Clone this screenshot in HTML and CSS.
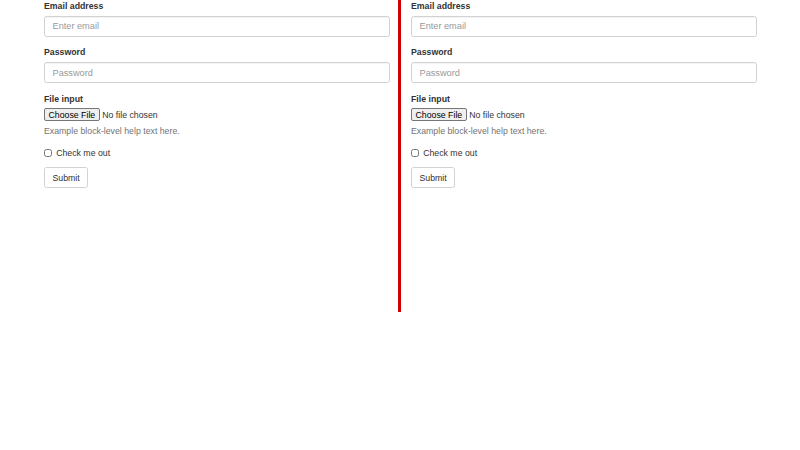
FILE: index.html
```html
<!DOCTYPE html>
<html lang="en">
<head>
<meta charset="utf-8">
<title>Forms</title>
<link rel="stylesheet" href="styles.css">
</head>
<body>
<div class="panes">
  <div class="pane pane-left">
    <form class="form">
      <div class="form-group">
        <label class="label" for="email1">Email address</label>
        <input class="form-control" type="email" id="email1" placeholder="Enter email">
      </div>
      <div class="form-group">
        <label class="label" for="pass1">Password</label>
        <input class="form-control" type="password" id="pass1" placeholder="Password">
      </div>
      <div class="form-group">
        <label class="label" for="file1">File input</label>
        <input class="file-input" type="file" id="file1">
        <p class="help-block">Example block-level help text here.</p>
      </div>
      <div class="checkbox">
        <label class="check-label"><input class="check" type="checkbox"> Check me out</label>
      </div>
      <button type="button" class="btn">Submit</button>
    </form>
  </div>
  <div class="pane pane-right">
    <form class="form">
      <div class="form-group">
        <label class="label" for="email2">Email address</label>
        <input class="form-control" type="email" id="email2" placeholder="Enter email">
      </div>
      <div class="form-group">
        <label class="label" for="pass2">Password</label>
        <input class="form-control" type="password" id="pass2" placeholder="Password">
      </div>
      <div class="form-group">
        <label class="label" for="file2">File input</label>
        <input class="file-input" type="file" id="file2">
        <p class="help-block">Example block-level help text here.</p>
      </div>
      <div class="checkbox">
        <label class="check-label"><input class="check" type="checkbox"> Check me out</label>
      </div>
      <button type="button" class="btn">Submit</button>
    </form>
  </div>
</div>
</body>
</html>
```

FILE: styles.css
```css
html, body {
  margin: 0;
  padding: 0;
  background: #fff;
}

body {
  font-family: "Liberation Sans", Arial, Helvetica, sans-serif;
  font-size: 8.75px;
  line-height: 12.5px;
  color: #333;
}

.panes {
  display: grid;
  grid-template-columns: 357px 355.5px;
  padding-left: 44px;
}

.pane-left {
  padding-right: 8.5px;
  border-right: 3px solid #d10000;
  min-height: 312px;
}

.pane-right {
  padding-left: 10px;
}

.form {
  margin: 0;
}

.form-group {
  margin-bottom: 9.375px;
}

.label {
  display: inline-block;
  max-width: 100%;
  margin-bottom: 3.125px;
  font-weight: 700;
}

.form-control {
  display: block;
  box-sizing: border-box;
  width: 100%;
  height: 21.25px;
  margin: 0;
  padding: 3px 7.5px;
  font-family: inherit;
  font-size: 9.2px;
  line-height: 12.5px;
  color: #555;
  background-color: #fff;
  border: 1px solid #d2d2d2;
  border-radius: 2.5px;
  box-shadow: inset 0 1px 1px rgba(0, 0, 0, 0.05);
}

.form-control::placeholder {
  color: #999;
  opacity: 1;
}

.file-input {
  display: block;
  margin: 0;
  font-family: inherit;
  font-size: 8.75px;
  line-height: 12.5px;
  color: inherit;
}

.file-input::file-selector-button {
  font-family: inherit;
  font-size: 8.75px;
  margin: 0 2.5px 0 0;
  padding: 0.5px 3.5px;
  border: 1px solid #767676;
  border-radius: 2px;
  background: #efefef;
  color: #000;
}

.help-block {
  display: block;
  margin: 3.5px 0 6.25px;
  color: #737373;
}

.checkbox {
  display: block;
  margin: 6.25px 0;
  min-height: 12.5px;
}

.check-label {
  display: inline-flex;
  align-items: flex-start;
  min-height: 12.5px;
  font-weight: 400;
  cursor: pointer;
}

.check {
  margin: 2.5px 4px 0 0;
  width: 8.125px;
  height: 8.125px;
}

.btn {
  display: inline-block;
  box-sizing: border-box;
  height: 21.25px;
  margin: 0;
  padding: 3.75px 7.5px;
  font-family: inherit;
  font-size: 8.75px;
  line-height: 12.5px;
  color: #333;
  background-color: #fff;
  border: 1px solid #d2d2d2;
  border-radius: 2.5px;
  cursor: pointer;
}
```
